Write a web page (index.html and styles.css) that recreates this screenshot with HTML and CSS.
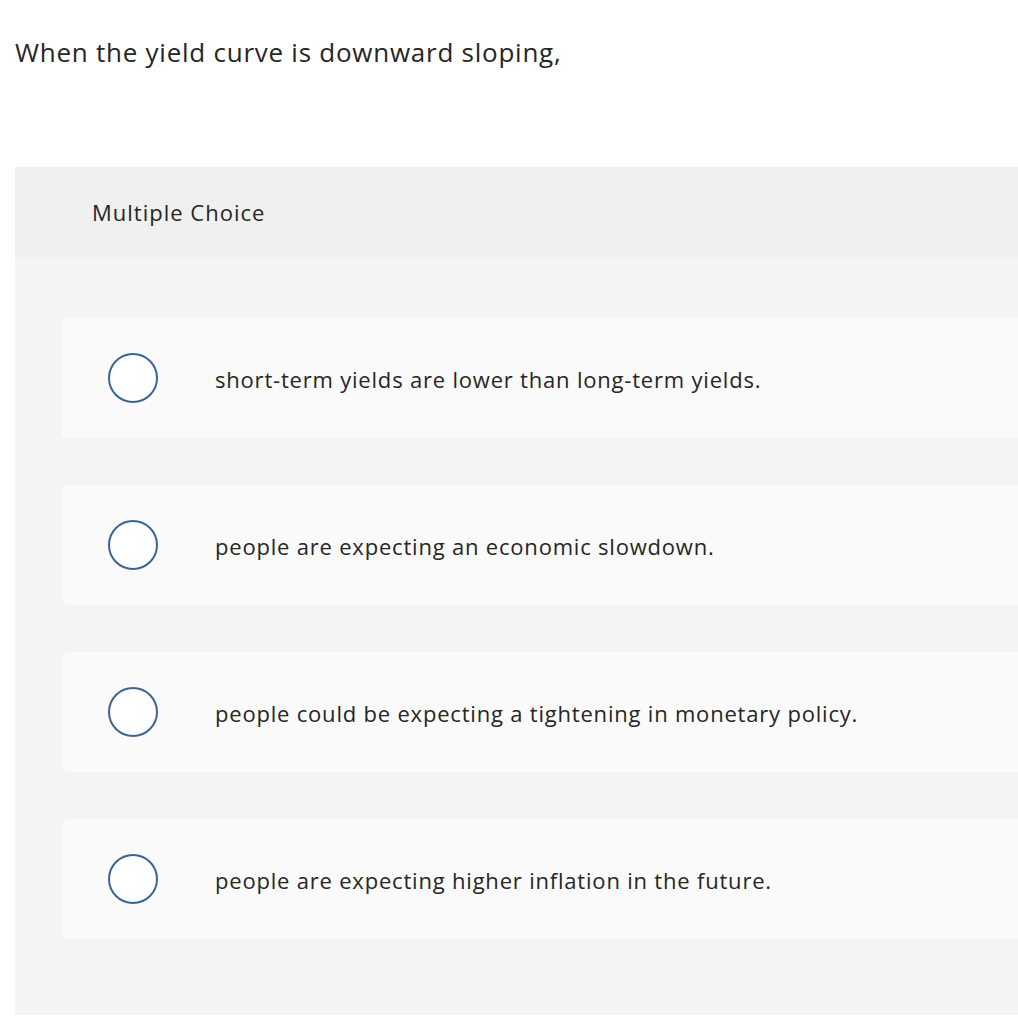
FILE: index.html
```html
<!DOCTYPE html>
<html>
<head>
<meta charset="utf-8">
<link rel="stylesheet" href="styles.css">
</head>
<body>
<div class="page">
  <p class="question">When the yield curve is downward sloping,</p>
  <div class="panel">
    <div class="panel-head">Multiple Choice</div>
    <div class="options">
      <div class="option"><span class="radio"></span><span class="label">short-term yields are lower than long-term yields.</span></div>
      <div class="option"><span class="radio"></span><span class="label">people are expecting an economic slowdown.</span></div>
      <div class="option"><span class="radio"></span><span class="label">people could be expecting a tightening in monetary policy.</span></div>
      <div class="option"><span class="radio"></span><span class="label">people are expecting higher inflation in the future.</span></div>
    </div>
  </div>
</div>
</body>
</html>
```

FILE: styles.css
```css
html, body {
  margin: 0;
  padding: 0;
  background: #ffffff;
}
body {
  font-family: "Open Sans", "Noto Sans", sans-serif;
  color: #262626;
}
.page {
  padding: 0 0 0 15px;
}
.question {
  margin: 0;
  padding-top: 35px;
  height: 167px;
  box-sizing: border-box;
  font-size: 26px;
  line-height: 34px;
  letter-spacing: 0.75px;
}
.panel {
  background: #f4f4f4;
  border-top-left-radius: 4px;
  padding-bottom: 76px;
}
.panel-head {
  background: #f0f0f0;
  border-top-left-radius: 4px;
  height: 91px;
  padding-left: 77px;
  display: flex;
  align-items: center;
  font-size: 22px;
  letter-spacing: 1px;
  box-sizing: border-box;
  padding-bottom: 2px;
}
.options {
  padding: 60px 0 0 47px;
  display: flex;
  flex-direction: column;
  gap: 47px;
}
.option {
  background: #fafafa;
  border-top-left-radius: 5px;
  border-bottom-left-radius: 5px;
  height: 120px;
  display: flex;
  align-items: center;
  padding-left: 46px;
}
.radio {
  width: 46px;
  height: 46px;
  border: 2px solid #3b6495;
  border-radius: 50%;
  background: #ffffff;
  flex: none;
}
.label {
  margin-left: 57px;
  font-size: 22px;
  letter-spacing: 0.8px;
  padding-top: 2px;
}
```
